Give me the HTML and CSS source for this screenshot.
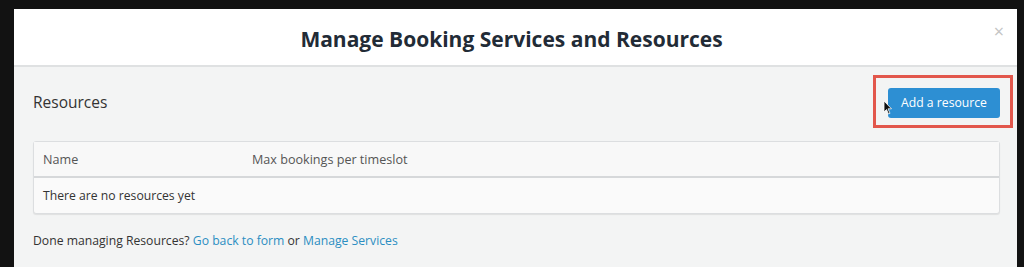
FILE: index.html
```html
<!DOCTYPE html>
<html lang="en">
<head>
  <meta charset="UTF-8" />
  <title>Manage Booking Services and Resources</title>
  <link rel="stylesheet" href="styles.css">
</head>
<body>

  <div class="modal">
    <div class="modal-header">
      <h1>Manage Booking Services and Resources</h1>
      <span class="close">&times;</span>
    </div>

    <div class="modal-body">
      <div class="section-head">
        <h2>Resources</h2>
        <div class="highlight">
          <svg class="cursor" width="10" height="15" viewBox="0 0 10 15">
            <path d="M1 1 L1 12 L3.5 9.5 L5.5 14 L7 13.3 L5 8.8 L8.5 8.8 Z" fill="#111" stroke="#fff" stroke-width="0.8"/>
          </svg>
          <button class="btn-add">Add a resource</button>
        </div>
      </div>

      <div class="table">
        <div class="row head">
          <div class="col-name">Name</div>
          <div class="col-max">Max bookings per timeslot</div>
        </div>
        <div class="row">
          <div class="col-name">There are no resources yet</div>
        </div>
      </div>

      <p class="done">Done managing Resources? <a href="#">Go back to form</a> or <a href="#">Manage Services</a></p>
    </div>
  </div>

</body>
</html>
```

FILE: styles.css
```css
body {
  margin: 0;
  background: #121212;
  font-family: "Open Sans", "Liberation Sans", sans-serif;
  height: 267px;
  overflow: hidden;
}
.modal {
  margin: 9px 7px 0 14px;
  background: #f3f4f4;
  height: 300px;
}
.modal-header {
  background: #fff;
  height: 56px;
  border-bottom: 2px solid #dfe1e2;
  display: flex;
  align-items: center;
  justify-content: center;
  position: relative;
  padding-right: 8px;
}
.modal-header h1 {
  margin: 0;
  font-size: 21px;
  font-weight: 700;
  color: #222b36;
  padding-top: 3px;
}
.close {
  position: absolute;
  right: 13px;
  top: 13px;
  font-size: 18px;
  color: #c4c4c4;
  line-height: 1;
}
.modal-body {
  padding: 0 17px 0 19px;
}
.section-head {
  display: flex;
  justify-content: space-between;
  align-items: center;
  height: 74px;
}
.section-head h2 {
  margin: 0;
  font-size: 15.5px;
  font-weight: 400;
  color: #333;
  padding-bottom: 4px;
}
.highlight {
  border: 3px solid #e2574c;
  padding: 10px 10px 7px 12px;
  margin-right: -13px;
  position: relative;
  display: flex;
  margin-bottom: 6px;
}
.cursor {
  position: absolute;
  left: 7px;
  top: 22px;
}
.btn-add {
  background: #2d8fd3;
  color: #fff;
  border: none;
  border-radius: 3px;
  font-family: inherit;
  font-size: 12.2px;
  width: 112px;
  height: 30px;
  padding: 0;
}
.table {
  background: #fafafa;
  border: 1px solid #dcdee0;
  border-radius: 3px;
  box-shadow: 0 1px 1px rgba(0,0,0,0.08);
  font-size: 12.2px;
  color: #333;
}
.row {
  display: flex;
  align-items: center;
  height: 35px;
  padding-left: 9px;
}
.row.head {
  background: #f8f8f8;
  border-bottom: 2px solid #d6d8da;
  color: #555;
  height: 34px;
  font-size: 12.6px;
}
.col-name {
  width: 209px;
}
.done {
  margin: 18px 0 0;
  font-size: 12.2px;
  color: #333;
}
.done a {
  color: #2b8ec2;
  text-decoration: none;
}
```
